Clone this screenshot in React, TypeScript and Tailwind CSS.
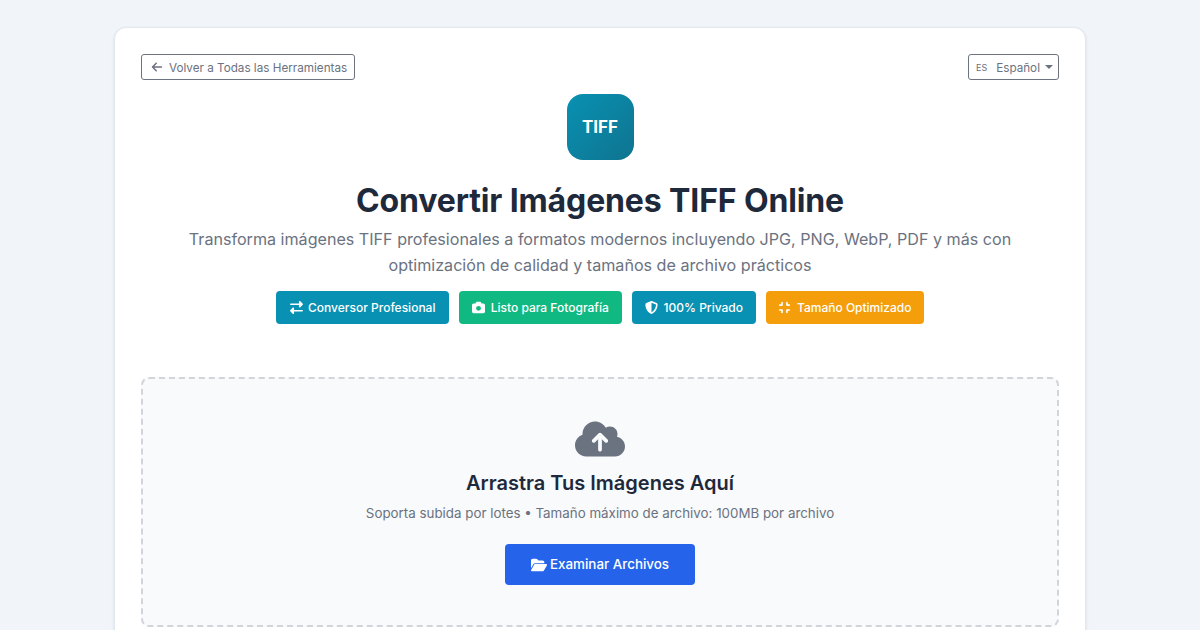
import { FaArrowLeft, FaCamera, FaCloudArrowUp, FaCompress, FaFolderOpen, FaRightLeft, FaShieldHalved } from 'react-icons/fa6';

const badges = [
  { label: 'Conversor Profesional', icon: FaRightLeft, color: 'bg-[#0891b2] w-[173px]' },
  { label: 'Listo para Fotografía', icon: FaCamera, color: 'bg-[#10b981] w-[163px]' },
  { label: '100% Privado', icon: FaShieldHalved, color: 'bg-[#0891b2] w-[124px]' },
  { label: 'Tamaño Optimizado', icon: FaCompress, color: 'bg-[#f59e0b] w-[158px]' },
];

export default function App() {
  return (
    <div className="h-[630px] overflow-hidden bg-[#f1f5f9] pt-[27px] font-['Inter',sans-serif]">
      <div className="mx-auto w-[972px] rounded-t-xl border border-[#e2e8f0] bg-white px-[26px] pt-[26px] pb-8 shadow-sm">
        <div className="flex items-center justify-between">
          <button
            type="button"
            className="flex h-[26px] w-[214px] items-center gap-[6px] rounded-[3px] border border-[#6b7280] pl-[9px] text-[11.7px] text-[#6b7280]"
          >
            <FaArrowLeft className="text-[12px]" />
            <span className="pt-[3px]">Volver a Todas las Herramientas</span>
          </button>
          <button
            type="button"
            className="flex h-[26px] w-[91px] items-center rounded-[3px] border border-[#6b7280] pl-[7px] text-[11.7px] text-[#6b7280]"
          >
            <span className="mr-[9px] pt-[2px] text-[9px]">ES</span>
            <span className="pt-[3px]">Español</span>
            <span className="ml-[5px] h-0 w-0 border-x-[4px] border-t-[4px] border-x-transparent border-t-[#6b7280]" />
          </button>
        </div>

        <div className="mt-[14px] flex flex-col items-center text-center">
          <div className="flex h-[66px] w-[67px] items-center justify-center rounded-2xl bg-gradient-to-br from-[#0891b2] to-[#0e7490] pt-[2px] text-[17px] font-bold text-white">
            TIFF
          </div>
          <h1 className="mt-[21px] text-[32px] leading-[40px] font-bold tracking-[-0.13px] text-[#1e293b]">
            Convertir Imágenes TIFF Online
          </h1>
          <p className="mt-[5px] w-[840px] text-[16.12px] leading-[26px] text-[#6b7280]">
            Transforma imágenes TIFF profesionales a formatos modernos incluyendo JPG, PNG, WebP, PDF y más con
            optimización de calidad y tamaños de archivo prácticos
          </p>
          <div className="mt-[13px] flex gap-[10px]">
            {badges.map((b) => {
              const Icon = b.icon;
              return (
                <span
                  key={b.label}
                  className={`flex h-[33px] items-center justify-center gap-[5.5px] rounded-[4px] text-[12px] font-medium text-white ${b.color}`}
                >
                  <Icon className="text-[13px]" />
                  {b.label}
                </span>
              );
            })}
          </div>
        </div>

        <div className="mt-[53px] flex h-[250px] flex-col items-center rounded-lg border-2 border-dashed border-[#d1d5db] bg-[#f8fafc] pt-[35px]">
          <FaCloudArrowUp className="text-[50px] text-[#6b7280]" />
          <h3 className="mt-[5px] text-[20px] leading-[28px] font-semibold text-[#1e293b]">
            Arrastra Tus Imágenes Aquí
          </h3>
          <p className="mt-[6px] text-[13.35px] leading-[20px] text-[#6b7280]">
            Soporta subida por lotes • Tamaño máximo de archivo: 100MB por archivo
          </p>
          <button
            type="button"
            className="mt-[21px] flex h-[41px] w-[190px] items-center justify-center gap-[3px] rounded-[4px] bg-[#2563eb] text-[13.4px] font-medium text-white"
          >
            <FaFolderOpen className="text-[16px]" />
            Examinar Archivos
          </button>
        </div>
      </div>
    </div>
  );
}
